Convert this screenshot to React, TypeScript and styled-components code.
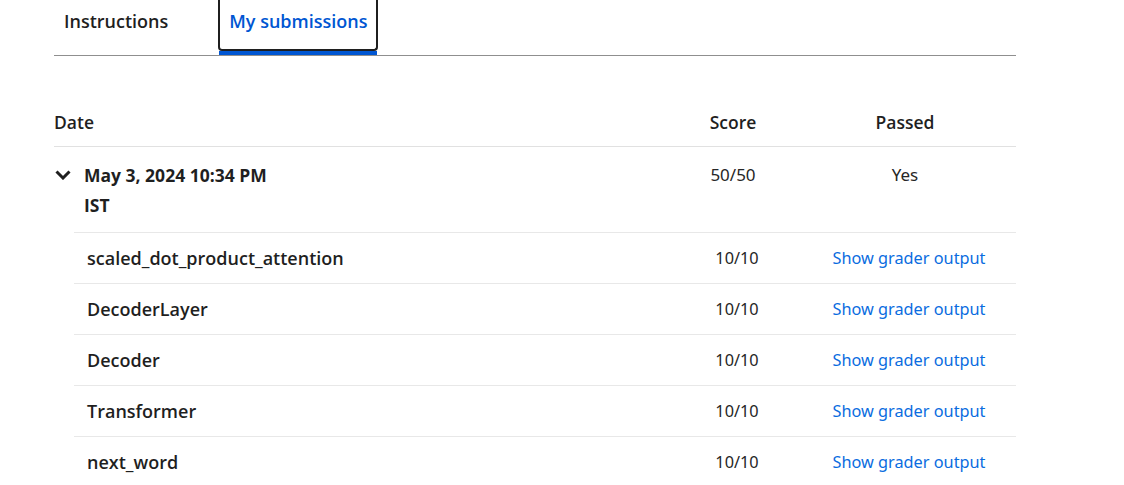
import styled, { createGlobalStyle } from "styled-components";

type Part = { name: string; score: string };

const parts: Part[] = [
  { name: "scaled_dot_product_attention", score: "10/10" },
  { name: "DecoderLayer", score: "10/10" },
  { name: "Decoder", score: "10/10" },
  { name: "Transformer", score: "10/10" },
  { name: "next_word", score: "10/10" },
];

const GlobalStyle = createGlobalStyle`
  body {
    margin: 0;
    background: #ffffff;
    color: #1f1f1f;
    font-family: "Open Sans", "Noto Sans", sans-serif;
  }
`;

const Chevron = () => (
  <svg width="16" height="10" viewBox="0 0 16 10" fill="none">
    <path d="M1.5 1.5 L8 8 L14.5 1.5" stroke="#1f1f1f" strokeWidth="3" />
  </svg>
);

const App = () => {
  return (
    <Page>
      <GlobalStyle />
      <Tabs>
        <Tab>
          <TabLabel>Instructions</TabLabel>
        </Tab>
        <Tab>
          <TabLabel active>My submissions</TabLabel>
          <TabBar />
        </Tab>
      </Tabs>
      <Table>
        <HeadRow>
          <HeadCell>Date</HeadCell>
          <HeadCell center>Score</HeadCell>
          <HeadCell center>Passed</HeadCell>
        </HeadRow>
        <SubmissionRow>
          <DateCell>
            <Toggle>
              <Chevron />
            </Toggle>
            <DateText>
              <span>May 3, 2024 10:34 PM</span>
              <span>IST</span>
            </DateText>
          </DateCell>
          <ValueCell>50/50</ValueCell>
          <ValueCell>Yes</ValueCell>
        </SubmissionRow>
        {parts.map((p) => (
          <PartRow key={p.name}>
            <PartName>{p.name}</PartName>
            <PartScore>{p.score}</PartScore>
            <GraderLink>Show grader output</GraderLink>
          </PartRow>
        ))}
      </Table>
    </Page>
  );
};

const Page = styled.div`
  width: 962px;
  padding-left: 54px;
`;

const Tabs = styled.div`
  display: flex;
  align-items: flex-end;
  gap: 40px;
  height: 55px;
  border-bottom: 1px solid #8f8f8f;
`;

const Tab = styled.div`
  display: flex;
  flex-direction: column;
  height: 55px;
`;

const TabLabel = styled.div<{ active?: boolean }>`
  box-sizing: border-box;
  height: ${({ active }) => (active ? "51px" : "55px")};
  padding: ${({ active }) => (active ? "7px 8px 0 9px" : "7px 10px 0")};
  font-size: 18px;
  font-weight: 600;
  line-height: 28px;
  color: ${({ active }) => (active ? "#0056d2" : "#1f1f1f")};
  border: ${({ active }) => (active ? "2px solid #1f1f1f" : "none")};
  border-top: none;
  border-radius: 0 0 4px 4px;
`;

const TabBar = styled.div`
  height: 4px;
  margin: 0 1px;
  background: #0056d2;
`;

const Table = styled.div`
  margin-top: 45px;
`;

const HeadRow = styled.div`
  display: grid;
  grid-template-columns: 1fr 150px 194px;
  padding: 10px 14px 13px 0;
  border-bottom: 1px solid #e1e1e1;
`;

const HeadCell = styled.div<{ center?: boolean }>`
  font-size: 17.5px;
  font-weight: 600;
  line-height: 22px;
  text-align: ${({ center }) => (center ? "center" : "left")};
`;

const SubmissionRow = styled.div`
  display: grid;
  grid-template-columns: 1fr 150px 194px;
  padding: 13px 14px 12px 0;
`;

const DateCell = styled.div`
  display: flex;
  align-items: flex-start;
  gap: 13px;
`;

const Toggle = styled.div`
  display: flex;
  padding: 10px 0 0 1px;
`;

const DateText = styled.div`
  display: flex;
  flex-direction: column;
  font-size: 17.5px;
  font-weight: 700;
  line-height: 30px;
`;

const ValueCell = styled.div`
  font-family: "Noto Sans", "Liberation Sans", sans-serif;
  font-size: 17px;
  line-height: 30px;
  text-align: center;
  color: #262626;
`;

const PartRow = styled.div`
  display: grid;
  grid-template-columns: 1fr 150px 194px;
  align-items: center;
  height: 50px;
  margin-left: 20px;
  padding: 0 10px 0 13px;
  border-top: 1px solid #e8e8e8;
`;

const PartName = styled.div`
  font-size: 18px;
  font-weight: 600;
  line-height: 24px;
`;

const PartScore = styled.div`
  font-family: "Noto Sans", "Liberation Sans", sans-serif;
  font-size: 16.3px;
  text-align: center;
  color: #262626;
`;

const GraderLink = styled.a`
  font-family: "Noto Sans", "Liberation Sans", sans-serif;
  font-size: 16.3px;
  text-align: center;
  color: #0a6ce0;
  cursor: pointer;
`;

export default App;
